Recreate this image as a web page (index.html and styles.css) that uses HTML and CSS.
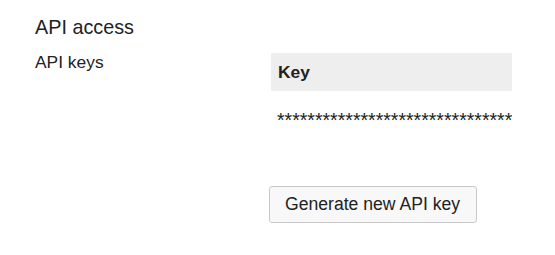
FILE: index.html
```html
<!DOCTYPE html>
<html>
<head>
<meta charset="utf-8">
<link rel="stylesheet" href="styles.css">
</head>
<body>
<div class="page">
  <h2 class="title">API access</h2>
  <div class="section">
    <div class="label">API keys</div>
    <div class="content">
      <div class="table">
        <div class="thead">Key</div>
        <div class="trow">**************************************</div>
      </div>
      <button class="btn">Generate new API key</button>
    </div>
  </div>
</div>
</body>
</html>
```
FILE: styles.css
```css
html, body {
  margin: 0;
  padding: 0;
  background: #fff;
}
body {
  font-family: "Liberation Sans", Arial, sans-serif;
  color: #222;
}
.page {
  padding: 15px 0 0 35px;
}
.title {
  margin: 0;
  font-size: 19.8px;
  line-height: 24px;
  font-weight: normal;
}
.section {
  display: flex;
  align-items: flex-start;
  margin-top: 12px;
}
.label {
  width: 236px;
  font-size: 17.4px;
  line-height: 22px;
}
.content {
  display: flex;
  flex-direction: column;
  align-items: flex-start;
  margin-top: 2px;
}
.table {
  width: 241px;
  overflow: hidden;
}
.thead {
  background: #eeeeee;
  font-weight: bold;
  font-size: 17.4px;
  line-height: 22px;
  padding: 8px 7px;
}
.trow {
  font-size: 19.5px;
  line-height: 22px;
  padding: 18px 0 16px 6px;
  white-space: nowrap;
  letter-spacing: 0;
}
.btn {
  margin: 39px 0 0 -2px;
  font-family: "Liberation Sans", Arial, sans-serif;
  font-size: 17.6px;
  line-height: 21px;
  color: #222;
  background: #f8f8f8;
  border: 1px solid #c8c8c8;
  border-radius: 3px;
  padding: 7px 16px 7px 15px;
}
```
